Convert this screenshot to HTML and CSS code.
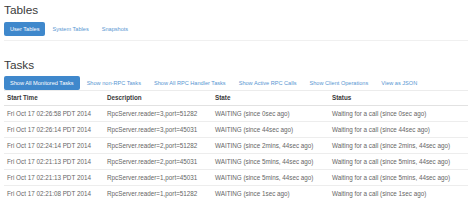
FILE: index.html
```html
<!DOCTYPE html>
<html lang="en">
<head>
  <meta charset="UTF-8" />
  <title>Tables</title>
  <link rel="stylesheet" href="styles.css">
</head>
<body>
  <div class="page">
    <h3>Tables</h3>
    <ul class="pills">
      <li class="active"><a href="#">User Tables</a></li>
      <li><a href="#">System Tables</a></li>
      <li><a href="#">Snapshots</a></li>
    </ul>
    <hr />

    <h3 class="tasks-title">Tasks</h3>
    <ul class="pills pills-tasks">
      <li class="active"><a href="#">Show All Monitored Tasks</a></li>
      <li><a href="#">Show non-RPC Tasks</a></li>
      <li><a href="#">Show All RPC Handler Tasks</a></li>
      <li><a href="#">Show Active RPC Calls</a></li>
      <li><a href="#">Show Client Operations</a></li>
      <li><a href="#">View as JSON</a></li>
    </ul>

    <table class="tasks">
      <thead>
        <tr>
          <th class="col-time">Start Time</th>
          <th class="col-desc">Description</th>
          <th class="col-state">State</th>
          <th>Status</th>
        </tr>
      </thead>
      <tbody>
        <tr>
          <td>Fri Oct 17 02:26:58 PDT 2014</td>
          <td>RpcServer.reader=3,port=51282</td>
          <td>WAITING (since 0sec ago)</td>
          <td>Waiting for a call (since 0sec ago)</td>
        </tr>
        <tr>
          <td>Fri Oct 17 02:26:14 PDT 2014</td>
          <td>RpcServer.reader=3,port=45031</td>
          <td>WAITING (since 44sec ago)</td>
          <td>Waiting for a call (since 44sec ago)</td>
        </tr>
        <tr>
          <td>Fri Oct 17 02:24:14 PDT 2014</td>
          <td>RpcServer.reader=2,port=51282</td>
          <td>WAITING (since 2mins, 44sec ago)</td>
          <td>Waiting for a call (since 2mins, 44sec ago)</td>
        </tr>
        <tr>
          <td>Fri Oct 17 02:21:13 PDT 2014</td>
          <td>RpcServer.reader=2,port=45031</td>
          <td>WAITING (since 5mins, 44sec ago)</td>
          <td>Waiting for a call (since 5mins, 44sec ago)</td>
        </tr>
        <tr>
          <td>Fri Oct 17 02:21:13 PDT 2014</td>
          <td>RpcServer.reader=1,port=45031</td>
          <td>WAITING (since 5mins, 44sec ago)</td>
          <td>Waiting for a call (since 5mins, 44sec ago)</td>
        </tr>
        <tr>
          <td>Fri Oct 17 02:21:08 PDT 2014</td>
          <td>RpcServer.reader=1,port=51282</td>
          <td>WAITING (since 1sec ago)</td>
          <td>Waiting for a call (since 1sec ago)</td>
        </tr>
      </tbody>
    </table>
  </div>
</body>
</html>
```

FILE: styles.css
```css
body {
  margin: 0;
  background: #fff;
  color: #333;
  font-family: "Liberation Sans", Arial, sans-serif;
}
.page {
  padding: 3px 6px 0 4px;
}
h3 {
  margin: 0 0 5px;
  font-size: 11.8px;
  line-height: 14px;
  font-weight: normal;
  color: #3a3a3a;
}
.tasks-title {
  margin: 17px 0 4px;
}
.pills {
  display: flex;
  gap: 1px;
  list-style: none;
  margin: 0 0 4px;
  padding: 0;
}
.pills a {
  display: block;
  padding: 3px 6px;
  font-size: 5.6px;
  line-height: 8px;
  color: #5896d2;
  text-decoration: none;
  border-radius: 2px;
}
.pills .active a {
  background-color: #3f88cc;
  color: #fff;
}
.pills-tasks {
  margin-bottom: 0;
}
hr {
  margin: 0;
  border: none;
  border-top: 1px solid #f0f0f0;
}
.tasks {
  width: 464px;
  border-collapse: collapse;
  border-top: 1px solid #ececec;
  font-size: 6.3px;
}
.tasks th {
  padding: 3px;
  line-height: 8px;
  text-align: left;
  font-weight: bold;
  color: #3a3a3a;
  border-bottom: 1px solid #e2e2e2;
}
.tasks td {
  padding: 3px;
  line-height: 9px;
  color: #666;
  border-top: 1px solid #ededed;
}
.col-time {
  width: 94px;
}
.col-desc {
  width: 102px;
}
.col-state {
  width: 111px;
}
```
